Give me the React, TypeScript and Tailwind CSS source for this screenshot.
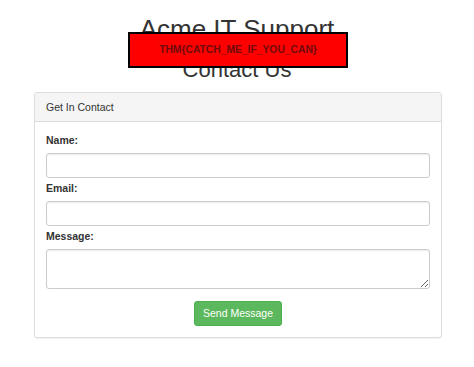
import React from 'react';

const App: React.FC = () => {
  const fields = [
    { label: 'Name:', type: 'text' },
    { label: 'Email:', type: 'email' },
  ];

  return (
    <div className="relative min-h-[367px] bg-white font-['Liberation_Sans',Arial,sans-serif] text-[#333]">
      <h1 className="pt-[14px] text-center text-[26px] leading-[30px] font-normal">Acme IT Support</h1>
      <h2 className="mt-[13px] text-center text-[22px] leading-[26px] font-normal">Contact Us</h2>

      <div className="absolute left-[128px] top-[32px] flex h-[36px] w-[220px] items-center justify-center border-2 border-black bg-[#ff0000]">
        <span className="text-[10.3px] leading-[14px] font-bold text-[#6e0c0c]">THM{'{'}CATCH_ME_IF_YOU_CAN{'}'}</span>
      </div>

      <div className="ml-[34px] mr-[32px] mt-[9px] rounded-[3px] border border-[#ddd] bg-white shadow-[0_1px_1px_rgba(0,0,0,0.05)]">
        <div className="h-[29px] rounded-t-[3px] border-b border-[#ddd] bg-[#f5f5f5] px-[11px] text-[10.5px] leading-[28px]">
          Get In Contact
        </div>
        <div className="px-[11px] pt-[11px] pb-[11px]">
          {fields.map((f) => (
            <div key={f.label} className="mb-[3px]">
              <label className="block text-[10.5px] font-bold leading-[15px] mb-[5px]">{f.label}</label>
              <input
                type={f.type}
                className="block h-[25px] w-full rounded-[3px] border border-[#ccc] bg-white shadow-[inset_0_1px_1px_rgba(0,0,0,0.075)] outline-none"
              />
            </div>
          ))}
          <label className="block text-[10.5px] font-bold leading-[15px] mb-[5px]">Message:</label>
          <textarea className="block h-[40px] w-full rounded-[3px] border border-[#ccc] bg-white shadow-[inset_0_1px_1px_rgba(0,0,0,0.075)] outline-none" />
          <div className="mt-[12px] flex justify-center">
            <button className="h-[25px] rounded-[3px] border border-[#4cae4c] bg-[#5cb85c] px-[8px] text-[10.5px] text-white">
              Send Message
            </button>
          </div>
        </div>
      </div>
    </div>
  );
};

export default App;
